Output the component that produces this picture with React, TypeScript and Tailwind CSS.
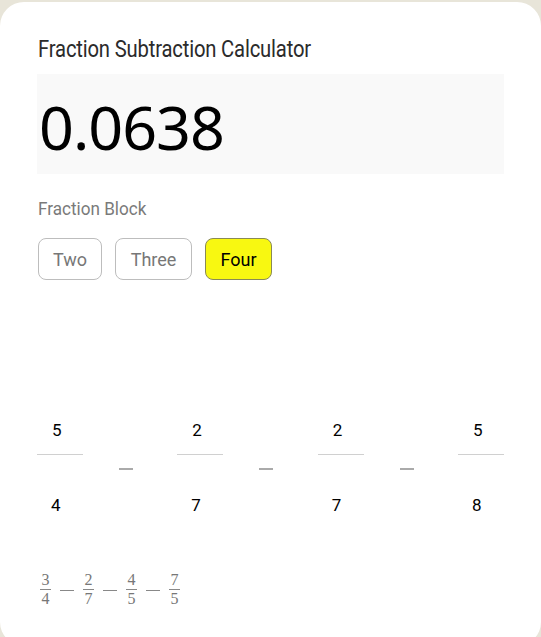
const fractions = [
  { num: 5, den: 4 },
  { num: 2, den: 7 },
  { num: 2, den: 7 },
  { num: 5, den: 8 },
];

const shown = [
  { num: 3, den: 4 },
  { num: 2, den: 7 },
  { num: 4, den: 5 },
  { num: 7, den: 5 },
];

function FracInput({ num, den }: { num: number; den: number }) {
  return (
    <div className="flex w-[46px] flex-col">
      <div className="h-[50px] pl-[15px] pt-[16px] text-[17px] leading-5 text-black">{num}</div>
      <div className="h-px bg-[#d0d0d0]" />
      <div className="h-[50px] pl-[14px] pt-[40px] text-[17px] leading-5 text-black">{den}</div>
    </div>
  );
}

export default function App() {
  return (
    <div className="min-h-screen bg-[#e8e5d9] pt-[2px]" style={{ fontFamily: "Roboto, sans-serif" }}>
      <div className="min-h-[644px] rounded-[24px] bg-white px-[38px] pt-[34px]">
        <h1 className="origin-left scale-x-[0.88] whitespace-nowrap text-[23px] leading-7 tracking-[-0.2px] text-[#2b2b2b]">
          Fraction Subtraction Calculator
        </h1>

        <div className="mt-[10px] h-[100px] w-[467px] -ml-px bg-[#f9f9f9] pl-[2px] pt-[22px]">
          <div className="text-[61px] leading-[62px] tracking-[-1px] text-black" style={{ fontFamily: "'Noto Sans', sans-serif" }}>
            0.0638
          </div>
        </div>

        <div className="mt-[23px] origin-left scale-x-[0.9] text-[19px] leading-6 text-[#7a7a7a]">Fraction Block</div>

        <div className="mt-[17px] flex gap-[13px]">
          <button className="h-[42px] w-[64px] rounded-[8px] border border-[#bdbdbd] bg-white text-[18px] text-[#777]">Two</button>
          <button className="h-[42px] w-[77px] rounded-[8px] border border-[#bdbdbd] bg-white text-[18px] text-[#777]">Three</button>
          <button className="h-[42px] w-[67px] rounded-[8px] border border-[#8a8a55] bg-[#f8f811] text-[18px] text-black">Four</button>
        </div>

        <div className="mt-[124px] flex w-[467px] -ml-px items-start justify-between">
          {fractions.map((f, i) => (
            <div key={i} className="contents">
              {i > 0 && <div className="-ml-[4px] mr-[4px] mt-[64px] h-[2px] w-[14px] bg-[#aaaaaa]" />}
              <FracInput num={f.num} den={f.den} />
            </div>
          ))}
        </div>

        <div className="mt-[67px] flex items-center gap-[9px] pl-[2px] text-[#777]" style={{ fontFamily: "'Liberation Serif', serif" }}>
          {shown.map((f, i) => (
            <div key={i} className="flex items-center gap-[9px]">
              {i > 0 && <div className="mt-[2px] h-px w-[14px] bg-[#888]" />}
              <div className="flex flex-col items-center text-[16px] leading-[16px]">
                <span>{f.num}</span>
                <span className="my-[1px] h-px w-[11px] bg-[#888]" />
                <span>{f.den}</span>
              </div>
            </div>
          ))}
        </div>
      </div>
    </div>
  );
}
